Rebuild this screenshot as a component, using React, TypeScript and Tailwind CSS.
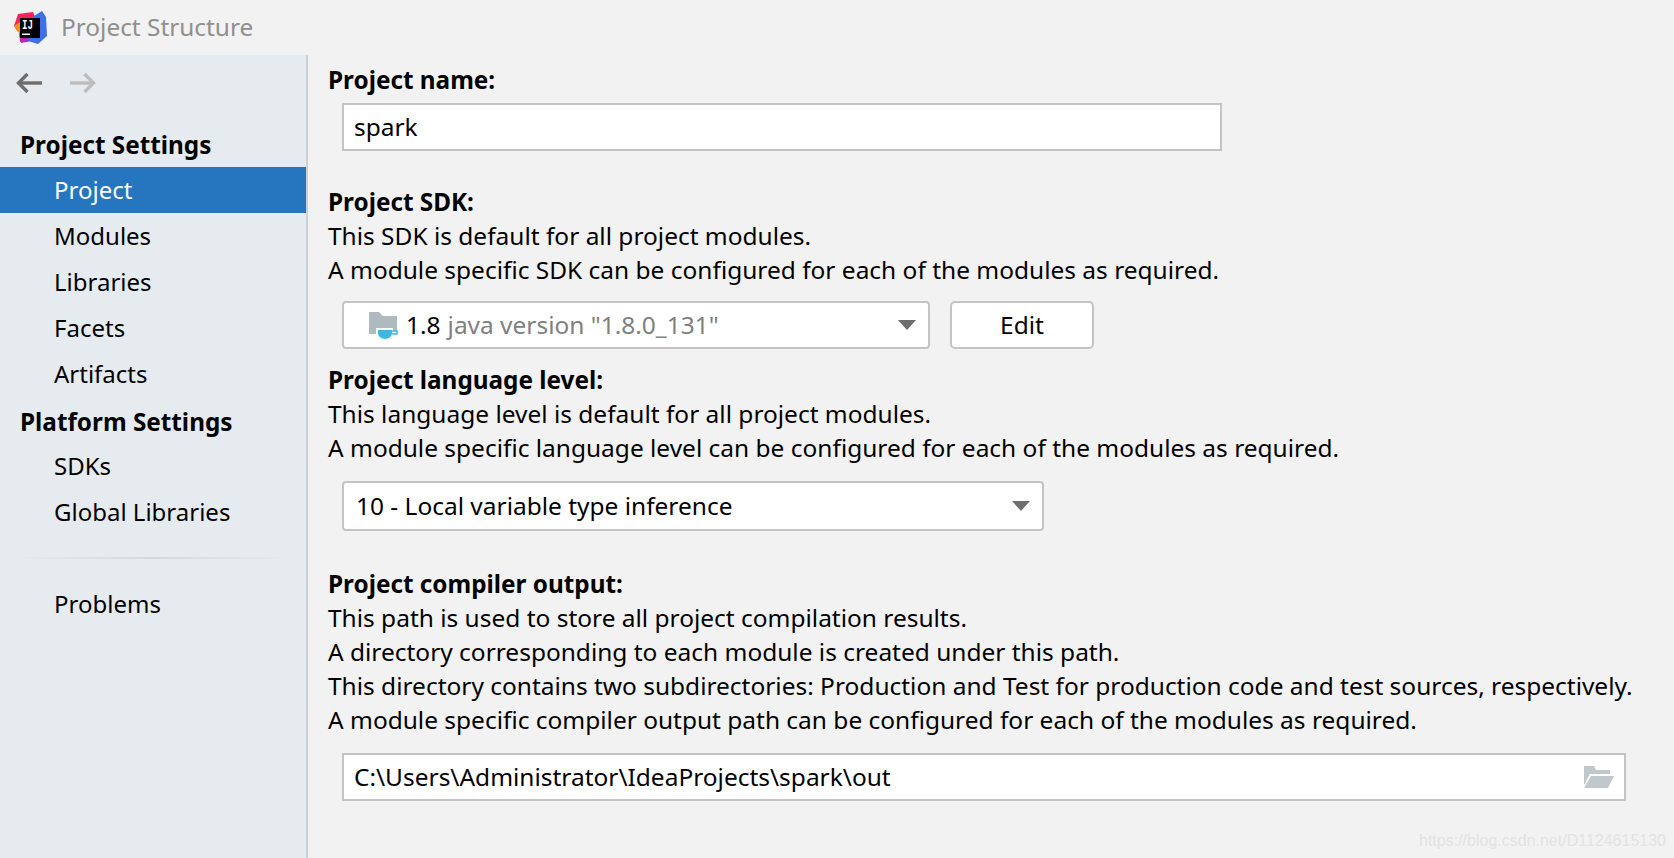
const font = { fontFamily: '"Noto Sans", "Open Sans", sans-serif' };

function Logo() {
  return (
    <svg width="34" height="34" viewBox="0 0 34 34" className="shrink-0">
      <polygon points="4,3 19,1 22,8 14,30 6,31 5,19 0,15" fill="#f5255c" />
      <polygon points="0,15 6,11 7,23 3,20" fill="#fb8c1e" />
      <polygon points="5,22 18,30 7,32" fill="#b42bb5" />
      <polygon points="20,5 28,0 32,6 33,25 24,33 14,30" fill="#3f6fe8" />
      <rect x="6" y="7" width="20" height="20" fill="#000" />
      <text x="8" y="18" fill="#fff" fontSize="12.5" fontWeight="700" fontFamily="Liberation Mono, monospace" textLength="11" lengthAdjust="spacingAndGlyphs">IJ</text>
      <rect x="8" y="22.5" width="8" height="1.5" fill="#fff" />
    </svg>
  );
}

function Caret() {
  return (
    <svg width="18" height="10" viewBox="0 0 18 10" className="shrink-0">
      <polygon points="0,0 18,0 9,10" fill="#6e6e6e" />
    </svg>
  );
}

function Item({ label, active }: { label: string; active?: boolean }) {
  return (
    <div className={`h-[46px] pl-[54px] flex items-center text-[24px] ${active ? "bg-[#2675bf] text-white" : "text-black"}`}>
      {label}
    </div>
  );
}

function Heading({ label, className }: { label: string; className?: string }) {
  return <div className={`h-[34px] leading-[34px] text-[24.3px] font-bold text-black ${className ?? ""}`}>{label}</div>;
}

function Line({ children }: { children: string }) {
  return <div className="h-[34px] leading-[34px] whitespace-nowrap">{children}</div>;
}

export default function App() {
  return (
    <div className="w-[1674px] h-[858px] overflow-hidden bg-[#f2f2f2] flex flex-col text-black" style={font}>
      <div className="h-[55px] shrink-0 flex items-center pl-[14px] gap-[13px]">
        <Logo />
        <span className="text-[24.4px] text-[#8f8f8f]">Project Structure</span>
      </div>
      <div className="flex-1 flex min-h-0">
        <aside className="w-[308px] shrink-0 bg-[#e6ebf0] border-r-2 border-[#cdd0d2] flex flex-col">
          <div className="h-[56px] flex items-center pl-[16px] gap-[28px]">
            <svg width="26" height="22" viewBox="0 0 26 22" fill="none" strokeWidth="3.4" stroke="#6e6e6e">
              <path d="M26 11H3" />
              <path d="M11.5 2L2.5 11L11.5 20" />
            </svg>
            <svg width="26" height="22" viewBox="0 0 26 22" fill="none" strokeWidth="3.4" stroke="#bdbdbd">
              <path d="M0 11H23" />
              <path d="M14.5 2L23.5 11L14.5 20" />
            </svg>
          </div>
          <div className="h-[56px] pl-[20px] pt-[17px] leading-[34px] text-[24.3px] font-bold">Project Settings</div>
          <Item label="Project" active />
          <Item label="Modules" />
          <Item label="Libraries" />
          <Item label="Facets" />
          <Item label="Artifacts" />
          <div className="h-[46px] pl-[20px] pt-[4px] flex items-center text-[24.3px] font-bold">Platform Settings</div>
          <Item label="SDKs" />
          <Item label="Global Libraries" />
          <div className="h-[46px] flex items-center px-[12px]">
            <div className="h-[2px] w-full bg-gradient-to-r from-transparent via-[#d5d8da] to-transparent" />
          </div>
          <Item label="Problems" />
        </aside>
        <main className="flex-1 min-w-0 pl-[20px] text-[24.48px] relative">
          <Heading label="Project name:" className="mt-[8px]" />
          <div className="ml-[14px] mt-[6px] w-[880px] h-[48px] bg-white border-2 border-[#c4c4c4] flex items-center pl-[10px]">spark</div>

          <Heading label="Project SDK:" className="mt-[34px]" />
          <Line>This SDK is default for all project modules.</Line>
          <Line>A module specific SDK can be configured for each of the modules as required.</Line>
          <div className="ml-[14px] mt-[14px] flex gap-[20px]">
            <div className="w-[588px] h-[48px] bg-white border-2 border-[#c4c4c4] rounded-[4px] flex items-center pl-[25px] pr-[12px]">
              <svg width="30" height="30" viewBox="0 0 30 30" className="shrink-0 mr-[7px]">
                <path d="M0 2H10L14 6H28V24H0Z" fill="#afb9c0" />
                <path d="M7 18H24V21H29V25H23C22 28 19 30 15 30C11 30 8 28 7 24Z" fill="#fff" />
                <path d="M9 20H23V23C23 26 20 29 16 29C12 29 9 26 9 23Z" fill="#40b6e0" />
                <path d="M23 21H28V24H23" fill="none" stroke="#40b6e0" strokeWidth="1.5" />
              </svg>
              <span>1.8</span>
              <span className="ml-[7px] text-[#808080]">java version "1.8.0_131"</span>
              <span className="ml-auto"><Caret /></span>
            </div>
            <div className="w-[144px] h-[48px] bg-white border-2 border-[#c4c4c4] rounded-[5px] flex items-center justify-center">Edit</div>
          </div>

          <Heading label="Project language level:" className="mt-[14px]" />
          <Line>This language level is default for all project modules.</Line>
          <Line>A module specific language level can be configured for each of the modules as required.</Line>
          <div className="ml-[14px] mt-[16px] w-[702px] h-[50px] bg-white border-2 border-[#c4c4c4] rounded-[4px] flex items-center pl-[12px] pr-[12px]">
            <span>10 - Local variable type inference</span>
            <span className="ml-auto"><Caret /></span>
          </div>

          <Heading label="Project compiler output:" className="mt-[36px]" />
          <Line>This path is used to store all project compilation results.</Line>
          <Line>A directory corresponding to each module is created under this path.</Line>
          <Line>This directory contains two subdirectories: Production and Test for production code and test sources, respectively.</Line>
          <Line>A module specific compiler output path can be configured for each of the modules as required.</Line>
          <div className="ml-[14px] mt-[16px] w-[1284px] h-[48px] bg-white border-2 border-[#c4c4c4] flex items-center pl-[10px] pr-[10px]">
            <span>C:\Users\Administrator\IdeaProjects\spark\out</span>
            <svg width="30" height="22" viewBox="0 0 30 22" className="ml-auto shrink-0">
              <path d="M0 0H10L12 4H26V8H6L0 19Z" fill="#c0c8ce" />
              <path d="M7 10H30L24 22H0Z" fill="#c0c8ce" />
            </svg>
          </div>
          <div className="absolute right-[8px] bottom-[5px] text-[16px] text-[#e2e2e2]" style={{ fontFamily: '"Liberation Sans", sans-serif' }}>
            https://blog.csdn.net/D1124615130
          </div>
        </main>
      </div>
    </div>
  );
}
